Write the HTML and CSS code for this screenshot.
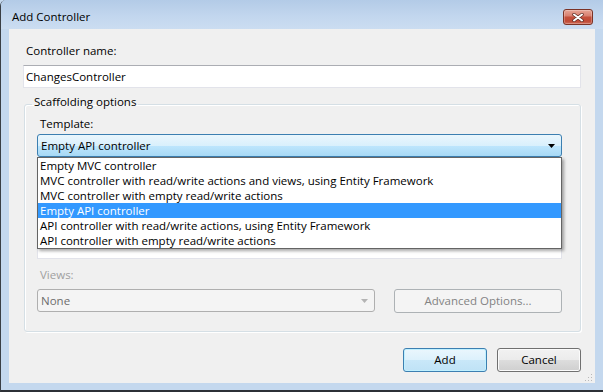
FILE: index.html
```html
<!DOCTYPE html>
<html>
<head>
<meta charset="utf-8">
<title>Add Controller</title>
<link rel="stylesheet" href="styles.css">
</head>
<body>
<div class="window">
  <div class="titlebar">
    <span class="title">Add Controller</span>
    <div class="close-btn">
      <svg width="12" height="9" viewBox="0 0 12 9">
        <path d="M2 1.5 L10 7.5 M10 1.5 L2 7.5" stroke="#5a2a22" stroke-width="3.4" stroke-linecap="round"/>
        <path d="M2 1.5 L10 7.5 M10 1.5 L2 7.5" stroke="#fff" stroke-width="2" stroke-linecap="round"/>
      </svg>
    </div>
  </div>

  <div class="frame">
    <div class="client">
      <div class="label">Controller name:</div>
      <div class="textbox">ChangesController</div>

      <fieldset class="group">
        <legend>Scaffolding options</legend>

        <div class="label label-first">Template:</div>
        <div class="combo-wrap">
          <div class="combo combo-open">
            <span>Empty API controller</span>
            <svg class="arrow" width="7" height="4" viewBox="0 0 7 4"><path d="M0 0 H7 L3.5 4 Z" fill="#000"/></svg>
          </div>
          <ul class="dropdown">
            <li>Empty MVC controller</li>
            <li>MVC controller with read/write actions and views, using Entity Framework</li>
            <li>MVC controller with empty read/write actions</li>
            <li class="selected">Empty API controller</li>
            <li>API controller with read/write actions, using Entity Framework</li>
            <li>API controller with empty read/write actions</li>
          </ul>
        </div>

        <!-- only the bottom edge of this one shows below the open list -->
        <div class="textbox textbox-covered"></div>

        <div class="label label-views disabled">Views:</div>
        <div class="views-row">
          <div class="combo combo-disabled">
            <span>None</span>
            <svg class="arrow" width="7" height="4" viewBox="0 0 7 4"><path d="M0 0 H7 L3.5 4 Z" fill="#b4b4b4"/></svg>
          </div>
          <div class="btn btn-disabled btn-wide">Advanced Options...</div>
        </div>
      </fieldset>

      <div class="buttons">
        <div class="btn btn-default">Add</div>
        <div class="btn">Cancel</div>
      </div>

      <svg class="grip" width="9" height="9" viewBox="0 0 9 9">
        <rect x="7" y="1" width="1" height="1" fill="#b8b8b8"/>
        <rect x="4" y="4" width="1" height="1" fill="#b8b8b8"/>
        <rect x="7" y="4" width="1" height="1" fill="#b8b8b8"/>
        <rect x="1" y="7" width="1" height="1" fill="#b8b8b8"/>
        <rect x="4" y="7" width="1" height="1" fill="#b8b8b8"/>
        <rect x="7" y="7" width="1" height="1" fill="#b8b8b8"/>
      </svg>
    </div>
  </div>
</div>
</body>
</html>
```

FILE: styles.css
```css
body {
  margin: 0;
  background: #c4d8ee;
  font-family: "Open Sans", "Noto Sans", sans-serif;
  font-size: 11.5px;
  color: #000;
}

.window {
  box-sizing: border-box;
  width: 603px;
  height: 392px;
  border-left: 1px solid #3a3f45;
  border-bottom: 2px solid #2c3036;
  border-top-left-radius: 6px;
  background: #c4d8ee;
  display: flex;
  flex-direction: column;
}

.titlebar {
  height: 29px;
  flex: none;
  display: flex;
  justify-content: space-between;
  align-items: flex-start;
  background: linear-gradient(#b3cbe7, #c2d6ee 55%, #cbddf1);
  border-top-left-radius: 5px;
}

.title {
  padding: 9px 0 0 11px;
  line-height: 16px;
}

.close-btn {
  box-sizing: border-box;
  width: 30px;
  height: 16px;
  margin: 9px 10px 0 0;
  border: 1px solid #7b3326;
  border-radius: 3px;
  background: linear-gradient(#e7a596 0%, #d98272 40%, #c4503c 52%, #c04a36 80%, #d0705c 100%);
  box-shadow: inset 0 0 0 1px rgba(255,255,255,0.25);
  display: flex;
  align-items: center;
  justify-content: center;
}

.frame {
  flex: 1;
  padding: 0 8px 7px 8px;
  display: flex;
}

.client {
  position: relative;
  flex: 1;
  background: #f0f0f0;
  padding: 14px 14px 11px 14px;
}

.label {
  line-height: 16px;
  padding-left: 3px;
}

.disabled {
  color: #a0a0a0;
}

.textbox {
  box-sizing: border-box;
  height: 23px;
  margin-top: 6px;
  padding-left: 2px;
  line-height: 21px;
  background: #fff;
  border: 1px solid #e2e3ea;
  border-top-color: #abadb3;
}

.group {
  margin: 6px 0 0 1px;
  padding: 0 18px 18px 12px;
  min-width: 0;
  border: 1px solid #d5dfe5;
  border-radius: 3px;
  box-shadow: inset 1px 1px 0 #fff, 1px 1px 0 #fff;
}

.group legend {
  margin-left: -5px;
  padding: 0 2px 4px 2px;
  line-height: 16px;
}

.label-first {
  margin-top: 2px;
}

.combo-wrap {
  position: relative;
  margin-top: 2px;
}

.combo {
  box-sizing: border-box;
  height: 23px;
  padding: 0 6px 0 3px;
  border-radius: 3px;
  display: flex;
  align-items: center;
  justify-content: space-between;
}

.combo-open {
  border: 1px solid #3c7fb1;
  background: linear-gradient(#eaf6fd 0%, #d9f0fc 50%, #bee6fd 50%, #a7d9f5 100%);
}

.combo-disabled {
  width: 338px;
  border: 1px solid #afafaf;
  background: #f4f4f4;
  color: #6d6d6d;
}

.dropdown {
  position: absolute;
  top: 100%;
  left: 0;
  right: 0;
  margin: 0;
  padding: 0;
  list-style: none;
  background: #fff;
  border: 1px solid #646464;
  box-shadow: 2px 2px 3px rgba(0, 0, 0, 0.35);
  z-index: 2;
}

.dropdown li {
  height: 15px;
  line-height: 15px;
  padding-left: 2px;
  white-space: nowrap;
}

.dropdown li.selected {
  background: #3399ff;
  color: #fff;
}

.textbox-covered {
  margin-top: 79px;
}

.label-views {
  margin-top: 8px;
}

.views-row {
  margin-top: 6px;
  display: flex;
  justify-content: space-between;
  align-items: flex-start;
}

.btn {
  box-sizing: border-box;
  width: 84px;
  height: 24px;
  line-height: 22px;
  text-align: center;
  border: 1px solid #707070;
  border-radius: 3px;
  box-shadow: inset 0 0 0 1px #fbfbfb;
  background: linear-gradient(#f2f2f2 0%, #ebebeb 50%, #dddddd 50%, #cfcfcf 100%);
}

.btn-default {
  border-color: #3c7fb1;
  box-shadow: inset 0 0 0 1px #bff0ff;
  background: linear-gradient(#eaf6fd 0%, #dcf1fc 50%, #c9e8f9 50%, #bfe2f6 100%);
}

.btn-disabled {
  border-color: #adb2b5;
  box-shadow: none;
  background: #f4f4f4;
  color: #838383;
}

.btn-wide {
  width: 168px;
}

.buttons {
  margin-top: 16px;
  display: flex;
  justify-content: flex-end;
  gap: 10px;
}

.grip {
  position: absolute;
  right: 2px;
  bottom: 1px;
}
```
